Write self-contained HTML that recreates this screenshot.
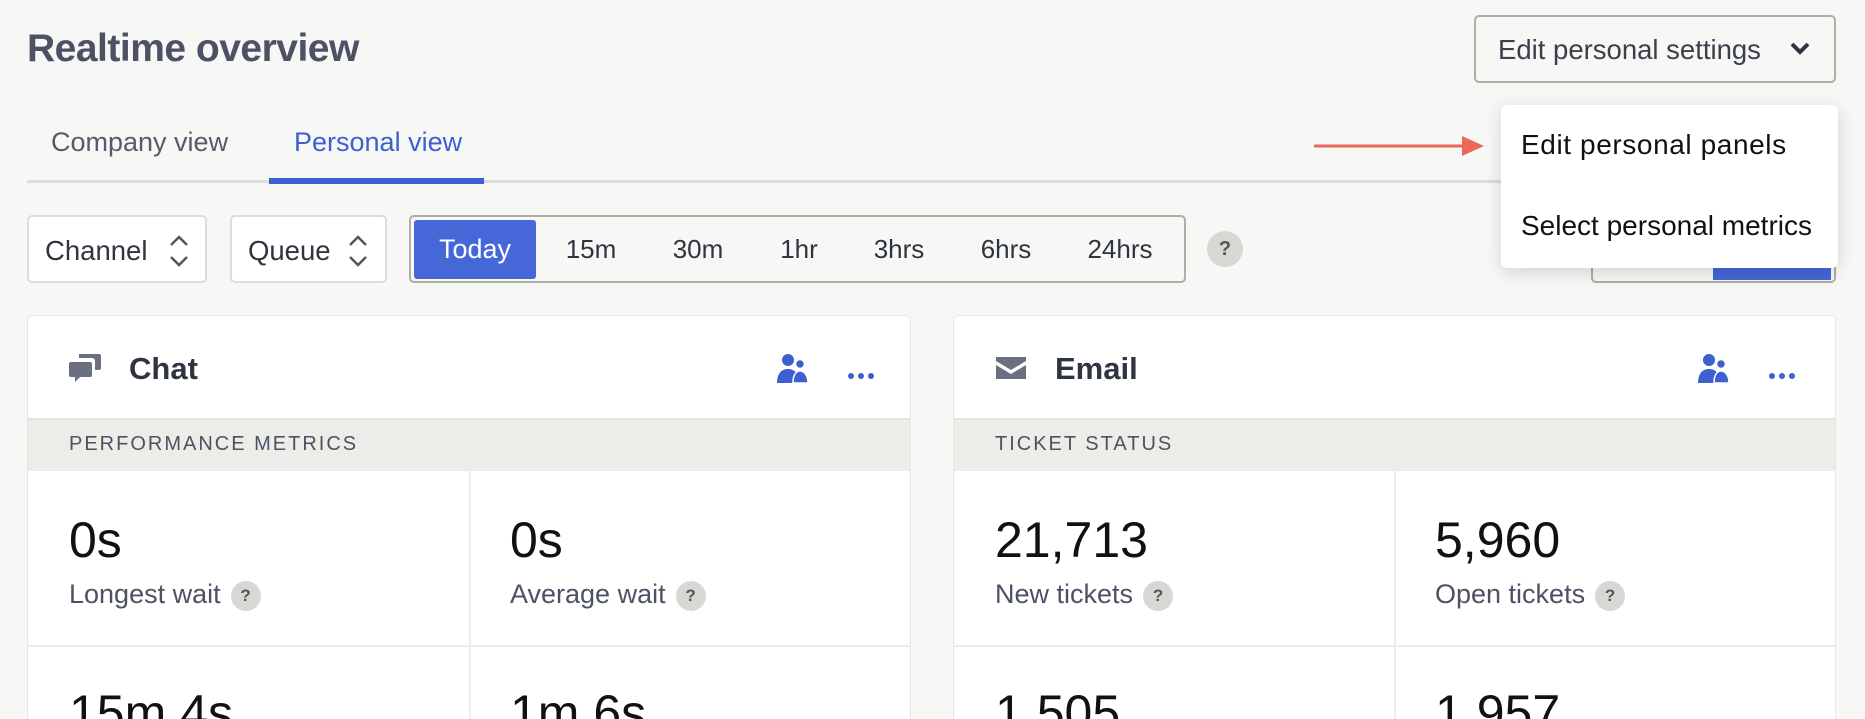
<!DOCTYPE html>
<html><head><meta charset="utf-8"><style>
*{box-sizing:border-box;margin:0;padding:0}
html,body{width:1865px;height:719px;overflow:hidden}
body{background:#f7f7f5;font-family:"Liberation Sans",sans-serif;color:#2f3441;position:relative}
.a{position:absolute}
.title{left:27px;top:27px;font-size:39px;font-weight:bold;color:#4c5264;letter-spacing:-0.5px}
.btn{left:1474px;top:15px;width:362px;height:68px;border:2px solid #aeaea6;border-radius:5px;font-size:27.5px;color:#3a3f4c;padding:17px 0 0 22px;background:#f7f7f5}
.tab{font-size:27px;top:127px;color:#555b6b}
.sel{border:2px solid #dcdcd8;border-radius:5px;background:#fff;height:68px;top:215px;font-size:27.5px;padding:18px 0 0 16px;color:#2f3441}
.grp{left:409px;top:215px;width:777px;height:68px;border:2px solid #aeaea6;border-radius:5px;background:#f7f7f5}
.t{top:234px;font-size:26px;color:#2f3441;transform:translateX(-50%)}
.q{width:36px;height:36px;border-radius:50%;background:#d7d7d4;color:#555;font-size:20px;text-align:center;line-height:36px;font-weight:bold}
.card{background:#fff;border:1px solid #e6e6e3;border-radius:5px;top:315px;height:420px}
.hd{position:absolute;left:0;right:0;top:102px;height:53px;background:#ecece9;border-top:2px solid #e2e2df;font-size:20px;letter-spacing:2px;color:#4c5264;padding:13px 0 0 41px}
.num{font-size:50px;color:#111}
.lbl{font-size:27px;color:#4c5264}
.sq{display:inline-block;width:30px;height:30px;border-radius:50%;background:#d7d7d4;font-size:17px;text-align:center;line-height:30px;color:#555;vertical-align:middle;margin-left:10px;font-weight:bold}
.vl{width:2px;background:#ececea;top:155px;height:270px}
.hl{height:2px;background:#ececea;top:329px;left:0;right:0}
.ct{font-size:31px;font-weight:bold;color:#2f3441;top:35px}
.dots{top:50px}
.dots i{display:inline-block;width:6px;height:6px;border-radius:50%;background:#3f5fd0;margin-right:4px}
</style></head><body>
<div class="a title">Realtime overview</div>
<div class="a btn">Edit personal settings
<svg class="a" style="left:313px;top:24px" width="22" height="16" viewBox="0 0 22 16"><path d="M3 3l8 8 8-8" fill="none" stroke="#2f3441" stroke-width="4"/></svg></div>
<div class="a tab" style="left:51px">Company view</div>
<div class="a tab" style="left:294px;color:#3f5fd0">Personal view</div>
<div class="a" style="left:27px;top:180px;width:1811px;height:3px;background:#dcdcd8"></div>
<div class="a" style="left:269px;top:178px;width:215px;height:6px;background:#3f5fd0"></div>
<div class="a sel" style="left:27px;width:180px">Channel
<svg class="a" style="left:138px;top:17px" width="24" height="34" viewBox="0 0 24 34"><path d="M4 11l8-8 8 8M4 23l8 8 8-8" fill="none" stroke="#555" stroke-width="2.5"/></svg></div>
<div class="a sel" style="left:230px;width:157px">Queue
<svg class="a" style="left:114px;top:17px" width="24" height="34" viewBox="0 0 24 34"><path d="M4 11l8-8 8 8M4 23l8 8 8-8" fill="none" stroke="#555" stroke-width="2.5"/></svg></div>
<div class="a grp"></div>
<div class="a" style="left:414px;top:220px;width:122px;height:59px;background:#4567d8;border-radius:3px;color:#fff;font-size:27px;text-align:center;line-height:59px">Today</div>
<div class="a t" style="left:591px">15m</div>
<div class="a t" style="left:698px">30m</div>
<div class="a t" style="left:799px">1hr</div>
<div class="a t" style="left:899px">3hrs</div>
<div class="a t" style="left:1006px">6hrs</div>
<div class="a t" style="left:1120px">24hrs</div>
<div class="a q" style="left:1207px;top:231px">?</div>
<div class="a" style="left:1591px;top:215px;width:245px;height:68px;border:2px solid #aeaea6;border-radius:5px"></div>
<div class="a" style="left:1713px;top:262px;width:118px;height:18px;background:#4567d8"></div>
<svg class="a" style="left:1314px;top:134px" width="172" height="24" viewBox="0 0 172 24"><path d="M0 12H150" stroke="#e8685a" stroke-width="3"/><path d="M148 2L170 12 148 22z" fill="#e8685a"/></svg>
<div class="a" style="left:1501px;top:105px;width:337px;height:163px;background:#fff;border-radius:6px;box-shadow:0 4px 18px rgba(0,0,0,.15)">
<div class="a" style="left:20px;top:24px;font-size:28px;letter-spacing:0.6px;color:#111">Edit personal panels</div>
<div class="a" style="left:20px;top:105px;font-size:28px;color:#111">Select personal metrics</div></div>

<div class="a card" style="left:27px;width:884px">
<svg class="a" style="left:41px;top:36px" width="34" height="32" viewBox="0 0 34 32"><path d="M10 2h20a2 2 0 0 1 2 2v12a2 2 0 0 1-2 2h-4v-9a3 3 0 0 0-3-3H10z" fill="#6b7080"/><path d="M2 10h19a2 2 0 0 1 2 2v11a2 2 0 0 1-2 2H11l-5 5v-5H2a2 2 0 0 1-2-2V12a2 2 0 0 1 2-2z" fill="#6b7080"/></svg>
<div class="a ct" style="left:101px">Chat</div>
<svg class="a" style="left:749px;top:37px" width="32" height="30" viewBox="0 0 32 30"><circle cx="11" cy="7" r="6" fill="#3f5fd0"/><path d="M0 30c0-10 5-14 11-14s11 4 11 14z" fill="#3f5fd0"/><circle cx="23" cy="11" r="4.5" fill="#3f5fd0" stroke="#fff" stroke-width="1.5"/><path d="M16 30c0-8 3-12 7-12s8 4 8 12z" fill="#3f5fd0" stroke="#fff" stroke-width="1.5"/></svg>
<div class="a dots" style="left:820px"><i></i><i></i><i></i></div>
<div class="hd">PERFORMANCE METRICS</div>
<div class="a vl" style="left:441px"></div>
<div class="a hl"></div>
<div class="a num" style="left:41px;top:195px">0s</div>
<div class="a lbl" style="left:41px;top:263px">Longest wait<span class="sq">?</span></div>
<div class="a num" style="left:482px;top:195px">0s</div>
<div class="a lbl" style="left:482px;top:263px">Average wait<span class="sq">?</span></div>
<div class="a num" style="left:41px;top:368px">15m 4s</div>
<div class="a num" style="left:482px;top:368px">1m 6s</div>
</div>

<div class="a card" style="left:953px;width:883px">
<svg class="a" style="left:42px;top:41px" width="30" height="22" viewBox="0 0 30 22"><path d="M0 0h30v4L15 13 0 4z" fill="#6b7080"/><path d="M0 8l15 9 15-9v14H0z" fill="#6b7080"/></svg>
<div class="a ct" style="left:101px">Email</div>
<svg class="a" style="left:744px;top:37px" width="32" height="30" viewBox="0 0 32 30"><circle cx="11" cy="7" r="6" fill="#3f5fd0"/><path d="M0 30c0-10 5-14 11-14s11 4 11 14z" fill="#3f5fd0"/><circle cx="23" cy="11" r="4.5" fill="#3f5fd0" stroke="#fff" stroke-width="1.5"/><path d="M16 30c0-8 3-12 7-12s8 4 8 12z" fill="#3f5fd0" stroke="#fff" stroke-width="1.5"/></svg>
<div class="a dots" style="left:815px"><i></i><i></i><i></i></div>
<div class="hd">TICKET STATUS</div>
<div class="a vl" style="left:440px"></div>
<div class="a hl"></div>
<div class="a num" style="left:41px;top:195px">21,713</div>
<div class="a lbl" style="left:41px;top:263px">New tickets<span class="sq">?</span></div>
<div class="a num" style="left:481px;top:195px">5,960</div>
<div class="a lbl" style="left:481px;top:263px">Open tickets<span class="sq">?</span></div>
<div class="a num" style="left:41px;top:368px">1,505</div>
<div class="a num" style="left:481px;top:368px">1,957</div>
</div>
</body></html>
